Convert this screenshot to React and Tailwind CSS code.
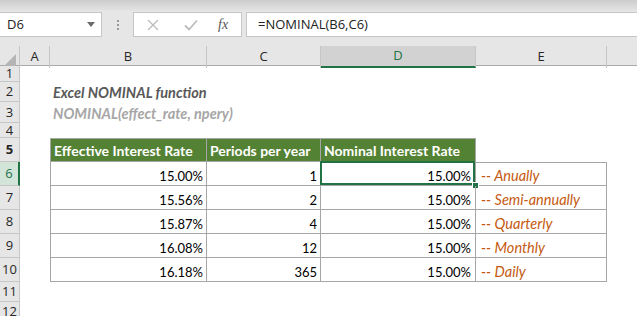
import React from 'react';

const COLS = 'grid grid-cols-[20px_30px_157px_114px_155px_131px_1fr]';

const rows = [
  { n: 6, rate: '15.00%', per: '1', nom: '15.00%', note: '-- Anually' },
  { n: 7, rate: '15.56%', per: '2', nom: '15.00%', note: '-- Semi-annually' },
  { n: 8, rate: '15.87%', per: '4', nom: '15.00%', note: '-- Quarterly' },
  { n: 9, rate: '16.08%', per: '12', nom: '15.00%', note: '-- Monthly' },
  { n: 10, rate: '16.18%', per: '365', nom: '15.00%', note: '-- Daily' },
];

function RowHead({ n, active }) {
  return (
    <div
      className={
        active
          ? 'flex items-center justify-center leading-none bg-[#d3e4d9] border-r-2 border-r-[#217346] border-b border-b-[#c6c6c6] text-[#217346] text-[13px] font-["Open_Sans",sans-serif]'
          : 'flex items-center justify-center leading-none bg-[#e6e6e6] border-r border-b border-[#c6c6c6] text-[#262626] text-[13px] font-["Open_Sans",sans-serif]'
      }
    >
      {n}
    </div>
  );
}

export default function App() {
  return (
    <div className="w-[637px] h-[316px] overflow-hidden bg-white font-['Lato','Open_Sans',sans-serif]">
      {/* ribbon edge */}
      <div className="h-[11px] bg-gradient-to-b from-[#cdcdcd] to-[#e4e4e4]" />

      {/* formula bar */}
      <div className="h-[35px] bg-[#e6e6e6] flex items-start pt-[1px] font-['Open_Sans',sans-serif]">
        <div className="w-[102px] h-[25px] bg-white border border-l-0 border-[#c6c6c6] flex items-center justify-between pl-[7px] pr-[6px]">
          <span className="text-[13px] text-[#222]">D6</span>
          <svg width="8" height="5" viewBox="0 0 8 5">
            <polygon points="0,0 8,0 4,5" fill="#6b6b6b" />
          </svg>
        </div>
        <div className="w-[31px] h-[25px] flex flex-col items-center justify-center gap-[2px]">
          <span className="w-[2px] h-[2px] bg-[#9a9a9a]" />
          <span className="w-[2px] h-[2px] bg-[#9a9a9a]" />
          <span className="w-[2px] h-[2px] bg-[#9a9a9a]" />
        </div>
        <div className="w-[109px] h-[25px] bg-white border border-[#c6c6c6] flex items-center">
          <svg width="12" height="12" viewBox="0 0 12 12" className="ml-[13px]">
            <path d="M1 1 L11 11 M11 1 L1 11" stroke="#bdbdbd" strokeWidth="1.4" />
          </svg>
          <svg width="14" height="12" viewBox="0 0 14 12" className="ml-[25px]">
            <path d="M1 6.5 L5 10.5 L13 1.5" stroke="#bdbdbd" strokeWidth="1.8" fill="none" />
          </svg>
          <span className="ml-[20px] text-[14px] italic text-[#555] font-['Liberation_Serif',serif]">fx</span>
        </div>
        <div className="ml-[4px] flex-1 h-[25px] bg-white border border-r-0 border-[#c6c6c6] flex items-center pl-[11px]">
          <span className="text-[13px] text-[#222]">=NOMINAL(B6,C6)</span>
        </div>
      </div>

      {/* column headers */}
      <div className={`${COLS} h-[20px] bg-[#e6e6e6] border-b border-[#ababab] text-[13px] text-[#262626] font-['Open_Sans',sans-serif]`}>
        <div className="flex items-end justify-end pr-[3px] pb-[2px] border-r border-[#c6c6c6]">
          <svg width="12" height="12" viewBox="0 0 12 12">
            <polygon points="12,0 12,12 0,12" fill="#b5b5b5" />
          </svg>
        </div>
        <div className="flex items-center justify-center border-r border-[#c6c6c6]">A</div>
        <div className="flex items-center justify-center border-r border-[#c6c6c6]">B</div>
        <div className="flex items-center justify-center border-r border-[#c6c6c6]">C</div>
        <div className="flex items-center justify-center border-r border-[#c6c6c6] bg-[#d2d2d2] text-[#217346] border-b-2 border-b-[#217346]">D</div>
        <div className="flex items-center justify-center border-r border-[#c6c6c6]">E</div>
        <div />
      </div>

      {/* row 1 */}
      <div className={`${COLS} h-[16px]`}>
        <RowHead n={1} />
      </div>
      {/* row 2 */}
      <div className={`${COLS} h-[20px]`}>
        <RowHead n={2} />
        <div />
        <div className="flex items-end pl-[3px] leading-[18px] whitespace-nowrap text-[14.5px] font-bold italic text-[#595959]">
          Excel NOMINAL function
        </div>
      </div>
      {/* row 3 */}
      <div className={`${COLS} h-[21px]`}>
        <RowHead n={3} />
        <div />
        <div className="flex items-end pl-[3px] leading-[18px] whitespace-nowrap text-[14.5px] font-bold italic text-[#a6a6a6]">
          NOMINAL(effect_rate, npery)
        </div>
      </div>
      {/* row 4 */}
      <div className={`${COLS} h-[15px]`}>
        <RowHead n={4} />
      </div>
      {/* row 5 header */}
      <div className={`${COLS} h-[24px] text-[14px] font-bold text-white`}>
        <RowHead n={5} />
        <div />
        <div className="flex items-end pl-[3px] leading-[18px] pb-[1px] whitespace-nowrap bg-[#548235] border border-[#a6a6a6]">Effective Interest Rate</div>
        <div className="flex items-end pl-[3px] leading-[18px] pb-[1px] whitespace-nowrap bg-[#548235] border-t border-r border-b border-[#a6a6a6]">Periods per year</div>
        <div className="flex items-end pl-[3px] leading-[18px] pb-[1px] whitespace-nowrap bg-[#548235] border-t border-r border-b border-[#a6a6a6]">Nominal Interest Rate</div>
      </div>

      {rows.map((r, i) => (
        <div key={r.n} className={`${COLS} h-[24px] text-[13px]`}>
          <RowHead n={r.n} active={i === 0} />
          <div />
          <div className="flex items-end justify-end pr-[3px] leading-[18px] border-l border-r border-b border-[#a6a6a6] text-black">{r.rate}</div>
          <div className="flex items-end justify-end pr-[3px] leading-[18px] border-r border-b border-[#a6a6a6] text-black">{r.per}</div>
          <div className="relative flex items-end justify-end pr-[4px] leading-[18px] border-r border-b border-[#a6a6a6] text-black">
            {r.nom}
            {i === 0 && (
              <>
                <div className="absolute -left-[1px] -top-[1px] right-0 bottom-0 border-2 border-[#217346]" />
                <div className="absolute -right-[4px] -bottom-[4px] w-[7px] h-[7px] bg-[#217346] border border-white" />
              </>
            )}
          </div>
          <div className={`flex items-end pl-[5px] leading-[19px] whitespace-nowrap border-r border-b border-[#a6a6a6] italic text-[14.5px] text-[#c55a11] ${i === 0 ? 'border-t' : ''}`}>
            {r.note}
          </div>
        </div>
      ))}

      {/* row 11 */}
      <div className={`${COLS} h-[20px]`}>
        <RowHead n={11} />
      </div>
      {/* row 12 */}
      <div className={`${COLS} h-[20px]`}>
        <RowHead n={12} />
      </div>
    </div>
  );
}
